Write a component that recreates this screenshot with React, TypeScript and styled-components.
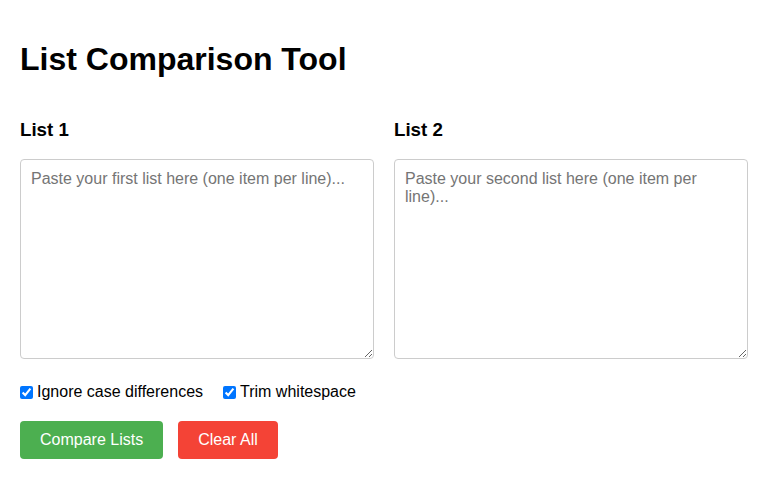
import * as React from "react";
import styled, { createGlobalStyle } from "styled-components";

const GlobalStyle = createGlobalStyle`
  body {
    margin: 0;
    padding: 20px;
    font-family: "Liberation Sans", Arial, sans-serif;
    color: #000;
    background: #fff;
  }
`;

const Title = styled.h1`
  font-size: 32px;
  margin: 21.44px 0;
`;

const Columns = styled.div`
  display: grid;
  grid-template-columns: 1fr 1fr;
  gap: 20px;
`;

const Column = styled.div`
  display: flex;
  flex-direction: column;
`;

const ListLabel = styled.h3`
  font-size: 18.72px;
  margin: 18.72px 0;
`;

const ListInput = styled.textarea`
  display: block;
  box-sizing: border-box;
  width: 100%;
  height: 200px;
  padding: 10px;
  border: 1px solid #ccc;
  border-radius: 4px;
  font-family: "Liberation Sans", Arial, sans-serif;
  font-size: 16px;
  resize: vertical;

  &::placeholder {
    color: #757575;
  }
`;

const Options = styled.div`
  display: flex;
  margin-top: 24px;
  font-size: 16px;
`;

const Option = styled.label`
  display: flex;
  align-items: center;
  margin-right: 20px;

  & > input {
    margin: 0 4px 0 0;
    width: 13px;
    height: 13px;
  }
`;

const Actions = styled.div`
  display: flex;
  gap: 15px;
  margin-top: 20px;
`;

const Button = styled.button<{ $tone: "go" | "stop" }>`
  padding: 10px 20px;
  border: none;
  border-radius: 4px;
  font-family: "Liberation Sans", Arial, sans-serif;
  font-size: 16px;
  line-height: 18px;
  color: #fff;
  cursor: pointer;
  background: ${(p) => (p.$tone === "go" ? "#4caf50" : "#f44336")};
`;

export default function App() {
  const [list1, setList1] = React.useState("");
  const [list2, setList2] = React.useState("");
  const [ignoreCase, setIgnoreCase] = React.useState(true);
  const [trim, setTrim] = React.useState(true);

  return (
    <>
      <GlobalStyle />
      <Title>List Comparison Tool</Title>
      <Columns>
        <Column>
          <ListLabel>List 1</ListLabel>
          <ListInput
            value={list1}
            onChange={(e) => setList1(e.target.value)}
            placeholder="Paste your first list here (one item per line)..."
          />
        </Column>
        <Column>
          <ListLabel>List 2</ListLabel>
          <ListInput
            value={list2}
            onChange={(e) => setList2(e.target.value)}
            placeholder="Paste your second list here (one item per line)..."
          />
        </Column>
      </Columns>
      <Options>
        <Option>
          <input type="checkbox" checked={ignoreCase} onChange={(e) => setIgnoreCase(e.target.checked)} />
          Ignore case differences
        </Option>
        <Option>
          <input type="checkbox" checked={trim} onChange={(e) => setTrim(e.target.checked)} />
          Trim whitespace
        </Option>
      </Options>
      <Actions>
        <Button $tone="go">Compare Lists</Button>
        <Button
          $tone="stop"
          onClick={() => {
            setList1("");
            setList2("");
          }}
        >
          Clear All
        </Button>
      </Actions>
    </>
  );
}
